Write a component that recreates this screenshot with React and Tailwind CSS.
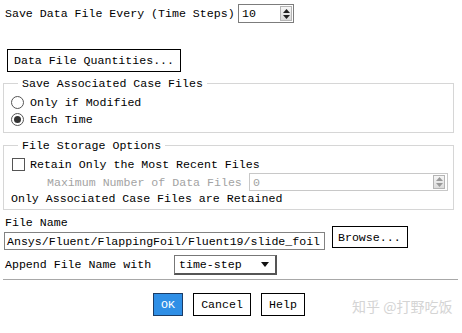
import React from 'react';

const mono = { fontFamily: '"Liberation Mono", "Noto Sans CJK SC", monospace' };

function SpinArrows({ disabled }) {
  const c = disabled ? '#9a9a9a' : '#222';
  return (
    <div className="flex h-full w-[12px] flex-col items-center justify-center gap-[2px] border border-[#b5b5b5] bg-gradient-to-b from-[#f6f6f6] to-[#dcdcdc]">
      <svg width="7" height="4" viewBox="0 0 7 4"><path d="M3.5 0 L7 4 L0 4 Z" fill={c} /></svg>
      <svg width="7" height="4" viewBox="0 0 7 4"><path d="M0 0 L7 0 L3.5 4 Z" fill={c} /></svg>
    </div>
  );
}

function Group({ title, children, className = '' }) {
  return (
    <fieldset className={`mx-[3px] w-[451px] border border-[#d6d6d6] pl-[6px] pt-[2px] ${className}`}>
      <legend className="ml-[8px] px-[4px] leading-[17px]">{title}</legend>
      {children}
    </fieldset>
  );
}

function Radio({ checked, label }) {
  return (
    <div className="flex h-[17px] items-center gap-[6px] pl-[1px]">
      <span className="flex h-[13px] w-[13px] items-center justify-center rounded-full border border-[#555] bg-white">
        {checked && <span className="h-[7px] w-[7px] rounded-full bg-[#333]" />}
      </span>
      <span>{label}</span>
    </div>
  );
}

export default function App() {
  return (
    <div className="relative h-[333px] w-[462px] overflow-hidden whitespace-nowrap bg-white text-[11.6px] leading-[17px] text-black" style={mono}>
      {/* time step row */}
      <div className="mt-[4px] flex h-[19px] items-center pl-[5px]">
        <span className="w-[233px]">Save Data File Every (Time Steps)</span>
        <div className="flex h-[19px] w-[56px] items-center border border-[#7c7c7c] bg-white pl-[3px] pr-[1px]">
          <span className="flex-1">10</span>
          <div className="h-[15px]"><SpinArrows /></div>
        </div>
      </div>

      <div className="mt-[26px] pl-[7px]">
        <button className="h-[23px] w-[174px] whitespace-nowrap border border-black bg-white px-[6px] text-left">Data File Quantities...</button>
      </div>

      <Group title="Save Associated Case Files" className="mt-[3px] pb-[4px]">
        <Radio label="Only if Modified" />
        <Radio checked label="Each Time" />
      </Group>

      <Group title="File Storage Options" className="mt-[4px] pb-[2px]">
        <div className="flex h-[17px] items-center gap-[5px] pl-[2px]">
          <span className="h-[13px] w-[13px] border border-[#555] bg-white" />
          <span>Retain Only the Most Recent Files</span>
        </div>
        <div className="flex h-[18px] items-center">
          <span className="w-[239px] pl-[37px] text-[#a3a3a3]">Maximum Number of Data Files</span>
          <div className="flex h-[18px] w-[199px] items-center border border-[#c8c8c8] pl-[3px] pr-[2px] text-[#a3a3a3]">
            <span className="flex-1">0</span>
            <div className="h-[14px]"><SpinArrows disabled /></div>
          </div>
        </div>
        <div className="h-[16px] pl-[1px] leading-[16px]">Only Associated Case Files are Retained</div>
      </Group>

      {/* file name */}
      <div className="mt-[4px] flex items-end pl-[4px]">
        <div className="flex flex-col">
          <span className="pl-[1px]">File Name</span>
          <div className="mt-[1px] flex h-[18px] w-[321px] items-center overflow-hidden border border-[#828282] pl-[2px]">
            Ansys/Fluent/FlappingFoil/Fluent19/slide_foil
          </div>
        </div>
        <button className="mb-[2px] ml-[7px] h-[22px] w-[76px] border border-black bg-white px-[5px] text-left">Browse...</button>
      </div>

      <div className="mt-[4px] flex h-[21px] items-center pl-[5px]">
        <span className="w-[169px]">Append File Name with</span>
        <div className="flex h-[20px] w-[103px] items-center border-t border-l border-t-[#777] border-l-[#777] border-r-2 border-b-2 border-r-[#555] border-b-[#555] bg-white pl-[4px] pr-[6px]">
          <span className="flex-1">time-step</span>
          <svg width="8" height="5" viewBox="0 0 8 5"><path d="M0 0 L8 0 L4 5 Z" fill="#111" /></svg>
        </div>
      </div>

      <div className="mx-[3px] mt-[4px] h-px w-[455px] bg-[#a8a8a8]" />

      <div className="mt-[13px] flex justify-center gap-[10px] pr-[4px]">
        <button className="h-[23px] w-[30px] border border-[#1b3c66] bg-[#2f8fe6] text-white">OK</button>
        <button className="h-[23px] w-[58px] border border-black bg-white">Cancel</button>
        <button className="h-[23px] w-[44px] border border-black bg-white">Help</button>
      </div>

      {/* watermark */}
      <div className="absolute left-[352px] top-[296px] text-[14px] leading-[20px] text-[#d4d4d4]" style={{ fontFamily: '"Noto Sans CJK SC", sans-serif' }}>
        知乎 @打野吃饭
      </div>
    </div>
  );
}
